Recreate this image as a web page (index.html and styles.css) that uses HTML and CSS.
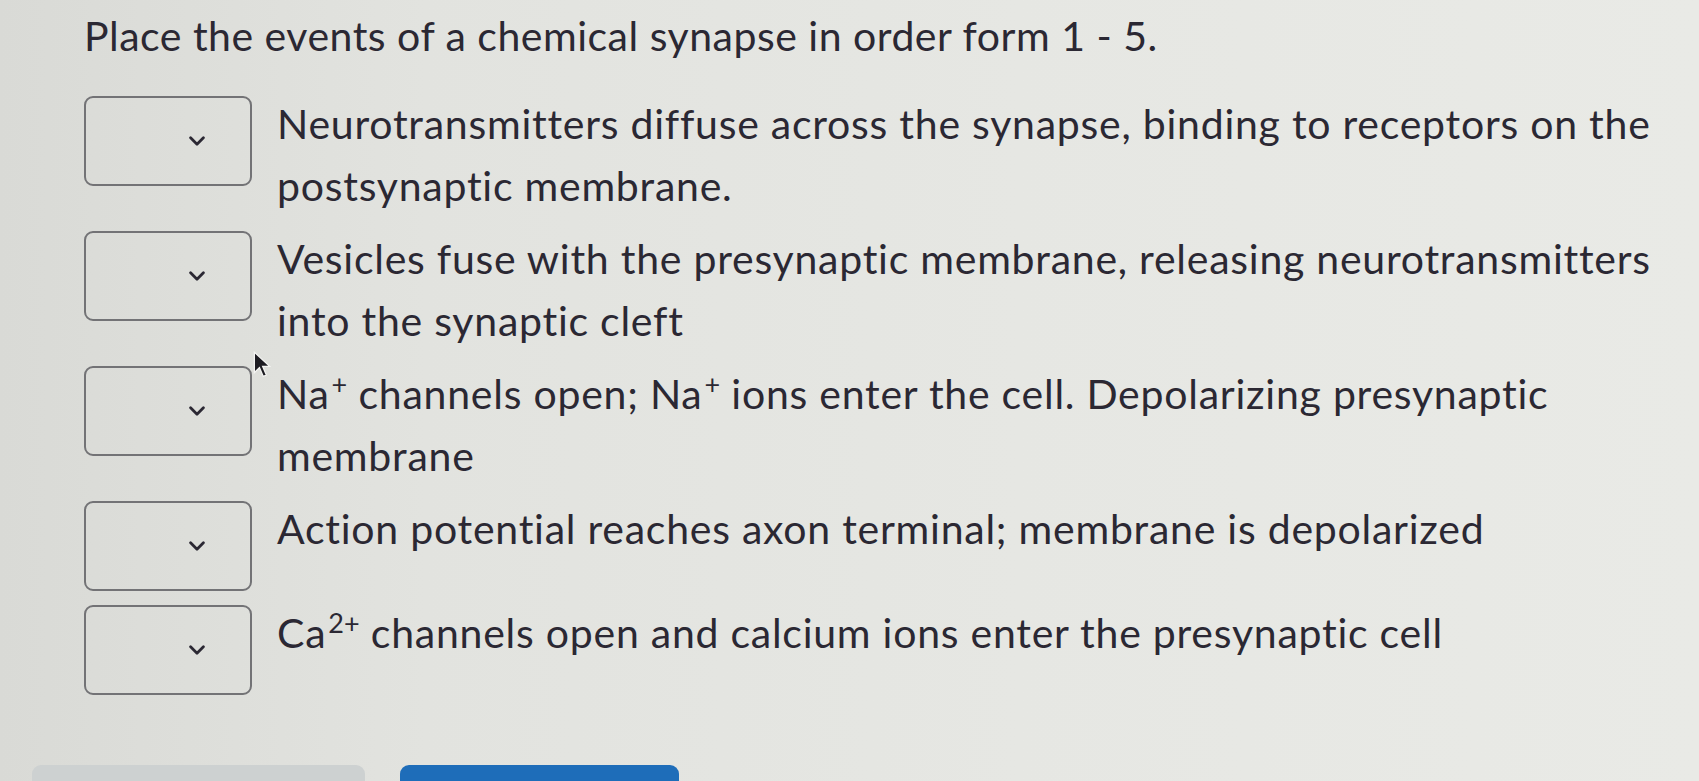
FILE: index.html
```html
<!DOCTYPE html>
<html lang="en">
<head>
<meta charset="utf-8">
<title>Quiz question</title>
<link rel="stylesheet" href="styles.css">
</head>
<body>
<main class="question">
  <h1 class="prompt">Place the events of a chemical synapse in order form 1 - 5.</h1>
  <ul class="matches">
    <li class="match">
      <div class="select"><svg class="chev" viewBox="0 0 15 9"><path d="M1.5 1.5 L7.5 7.5 L13.5 1.5"/></svg></div>
      <p class="answer">Neurotransmitters diffuse across the synapse, binding to receptors on the postsynaptic membrane.</p>
    </li>
    <li class="match">
      <div class="select"><svg class="chev" viewBox="0 0 15 9"><path d="M1.5 1.5 L7.5 7.5 L13.5 1.5"/></svg></div>
      <p class="answer">Vesicles fuse with the presynaptic membrane, releasing neurotransmitters into the synaptic cleft</p>
    </li>
    <li class="match">
      <div class="select"><svg class="chev" viewBox="0 0 15 9"><path d="M1.5 1.5 L7.5 7.5 L13.5 1.5"/></svg>
        <svg class="pointer" viewBox="0 0 14 22"><path d="M1 1 L1 17 L5 13 L8 20 L10.5 19 L7.5 12 L13 12 Z"/></svg>
      </div>
      <p class="answer">Na<sup>+</sup> channels open; Na<sup>+</sup> ions enter the cell. Depolarizing presynaptic membrane</p>
    </li>
    <li class="match">
      <div class="select"><svg class="chev" viewBox="0 0 15 9"><path d="M1.5 1.5 L7.5 7.5 L13.5 1.5"/></svg></div>
      <p class="answer">Action potential reaches axon terminal; membrane is depolarized</p>
    </li>
    <li class="match">
      <div class="select"><svg class="chev" viewBox="0 0 15 9"><path d="M1.5 1.5 L7.5 7.5 L13.5 1.5"/></svg></div>
      <p class="answer">Ca<sup>2+</sup> channels open and calcium ions enter the presynaptic cell</p>
    </li>
  </ul>
  <div class="actions">
    <button class="btn btn-secondary" type="button"></button>
    <button class="btn btn-primary" type="button"></button>
  </div>
</main>
</body>
</html>
```

FILE: styles.css
```css
html, body {
  margin: 0;
  height: 100%;
}

body {
  background: linear-gradient(90deg, #d9dad6 0%, #e2e3df 25%, #e6e7e3 60%, #e9eae6 100%);
  font-family: Lato, "Open Sans", sans-serif;
  font-variant-ligatures: none;
  color: #2b2833;
  overflow: hidden;
}

.question {
  padding: 12px 0 0 84px;
}

.prompt {
  margin: 0;
  font-size: 41px;
  line-height: 48px;
  font-weight: 400;
  letter-spacing: 0.5px;
}

.matches {
  list-style: none;
  margin: 36px 0 0;
  padding: 0;
  display: flex;
  flex-direction: column;
  gap: 14px;
}

.match {
  display: flex;
  align-items: flex-start;
  gap: 25px;
}

.select {
  position: relative;
  flex: none;
  width: 168px;
  height: 90px;
  border: 2px solid #737376;
  border-radius: 9px;
  display: flex;
  align-items: center;
  justify-content: flex-end;
  padding-right: 45px;
  box-sizing: border-box;
}

.chev {
  width: 16px;
  height: 10px;
  fill: none;
  stroke: #2b2833;
  stroke-width: 2.6;
  stroke-linecap: round;
  stroke-linejoin: round;
}

.pointer {
  position: absolute;
  right: -21px;
  top: -17px;
  width: 18px;
  height: 28px;
  fill: #1d1c22;
  stroke: #f4f4f2;
  stroke-width: 1;
}

.answer {
  margin: -3px 0 0;
  max-width: 1395px;
  font-size: 41px;
  line-height: 62px;
  letter-spacing: 0.75px;
}

.answer sup {
  font-size: 27px;
  line-height: 1;
  vertical-align: 15px;
  letter-spacing: 0;
  margin-left: 2px;
}

.actions {
  display: flex;
  gap: 35px;
  margin: 70px 0 0 -52px;
}

.btn {
  border: none;
  border-radius: 9px 9px 0 0;
  height: 17px;
  padding: 0;
}

.btn-secondary {
  width: 333px;
  background: #cdd1d1;
}

.btn-primary {
  width: 279px;
  background: #1e6db9;
}
```
